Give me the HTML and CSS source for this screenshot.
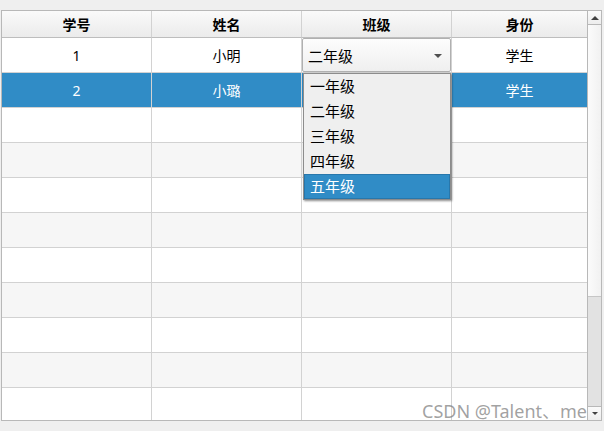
FILE: index.html
```html
<!DOCTYPE html>
<html lang="zh">

<head>
    <meta charset="UTF-8">
    <meta name="viewport" content="width=device-width, initial-scale=1.0">
    <title>学生表</title>
    <link rel="stylesheet" href="styles.css">
</head>

<body>
    <div class="view">
        <div class="table">
            <div class="head">学号</div>
            <div class="head">姓名</div>
            <div class="head">班级</div>
            <div class="head">身份</div>

            <div class="cell">1</div>
            <div class="cell">小明</div>
            <div class="cell editor">
                <div class="combo">
                    <span>二年级</span>
                    <span class="caret"></span>
                </div>
            </div>
            <div class="cell">学生</div>

            <div class="cell selected">2</div>
            <div class="cell selected">小璐</div>
            <div class="cell selected"></div>
            <div class="cell selected">学生</div>

            <div class="cell"></div><div class="cell"></div><div class="cell"></div><div class="cell"></div>
            <div class="cell alt"></div><div class="cell alt"></div><div class="cell alt"></div><div class="cell alt"></div>
            <div class="cell"></div><div class="cell"></div><div class="cell"></div><div class="cell"></div>
            <div class="cell alt"></div><div class="cell alt"></div><div class="cell alt"></div><div class="cell alt"></div>
            <div class="cell"></div><div class="cell"></div><div class="cell"></div><div class="cell"></div>
            <div class="cell alt"></div><div class="cell alt"></div><div class="cell alt"></div><div class="cell alt"></div>
            <div class="cell"></div><div class="cell"></div><div class="cell"></div><div class="cell"></div>
            <div class="cell alt"></div><div class="cell alt"></div><div class="cell alt"></div><div class="cell alt"></div>
            <div class="cell"></div><div class="cell"></div><div class="cell"></div><div class="cell"></div>
        </div>

        <div class="scrollbar">
            <div class="arrow up"><span class="tri-up"></span></div>
            <div class="handle"></div>
            <div class="groove"></div>
            <div class="arrow down"><span class="tri-down"></span></div>
        </div>

        <!-- open combo box popup -->
        <div class="popup">
            <div class="item">一年级</div>
            <div class="item">二年级</div>
            <div class="item">三年级</div>
            <div class="item">四年级</div>
            <div class="item current">五年级</div>
        </div>

        <div class="watermark">CSDN @Talent、me</div>
    </div>
</body>

</html>
```

FILE: styles.css
```css
:root {
    --bg-color: #efefef;
    --frame-color: #b8b8b8;
    --grid-color: #d2d2d2;
    --alt-row: #f6f6f6;
    --highlight: #308cc6;
}

body {
    margin: 0;
    background-color: var(--bg-color);
    font-family: "Noto Sans", "Noto Sans CJK SC", sans-serif;
    color: #000;
}

.view {
    position: relative;
    display: flex;
    width: 599px;
    height: 409px;
    margin: 10px 0 0 1px;
    border: 1px solid var(--frame-color);
    background-color: #fff;
}

.table {
    display: grid;
    grid-template-columns: 150px 150px 150px 135px;
    grid-auto-rows: 35px;
    grid-template-rows: 27px;
    width: 585px;
    overflow: hidden;
}

.head {
    display: flex;
    align-items: center;
    justify-content: center;
    box-sizing: border-box;
    border-right: 1px solid var(--grid-color);
    border-bottom: 1px solid #bdbdbd;
    background: linear-gradient(#fafafa, #ebebeb);
    font-size: 14px;
    font-weight: bold;
}

.cell {
    display: flex;
    align-items: center;
    justify-content: center;
    box-sizing: border-box;
    border-right: 1px solid var(--grid-color);
    border-bottom: 1px solid var(--grid-color);
    font-size: 14px;
}

.head:nth-child(4n),
.cell:nth-child(4n) {
    border-right: none;
}

.alt {
    background-color: var(--alt-row);
}

.selected {
    background-color: var(--highlight);
    color: #fff;
}

.editor {
    padding: 0;
    align-items: stretch;
    justify-content: stretch;
}

.combo {
    flex: 1;
    display: flex;
    align-items: center;
    justify-content: space-between;
    padding: 0 8px 0 5px;
    border: 1px solid #b0b0b0;
    border-radius: 2px;
    background: linear-gradient(#fdfdfd, #efefef);
    font-size: 15px;
}

.caret {
    width: 0;
    height: 0;
    border-left: 4px solid transparent;
    border-right: 4px solid transparent;
    border-top: 4px solid #505050;
    margin-top: 1px;
}

.scrollbar {
    display: flex;
    flex-direction: column;
    width: 13px;
    border-left: 1px solid var(--frame-color);
    background-color: #e2e2e2;
}

.arrow {
    display: flex;
    align-items: center;
    justify-content: center;
    height: 13px;
    background: linear-gradient(#fafafa, #ededed);
}

.arrow.up {
    border-bottom: 1px solid var(--frame-color);
}

.arrow.down {
    border-top: 1px solid var(--frame-color);
}

.tri-up {
    border-left: 4px solid transparent;
    border-right: 4px solid transparent;
    border-bottom: 4px solid #404040;
}

.tri-down {
    border-left: 3px solid transparent;
    border-right: 3px solid transparent;
    border-top: 3px solid #404040;
}

.handle {
    height: 272px;
    box-sizing: border-box;
    border-bottom: 1px solid #c6c6c6;
    background: linear-gradient(90deg, #fbfbfb, #f1f1f1);
}

.groove {
    flex: 1;
    background-color: #e2e2e2;
}

.popup {
    position: absolute;
    left: 301px;
    top: 62px;
    width: 146px;
    border: 1px solid #8c8c8c;
    background-color: #efefef;
    box-shadow: 1px 1px 2px rgba(0, 0, 0, 0.45);
}

.item {
    height: 25px;
    line-height: 25px;
    padding-left: 6px;
    font-size: 15px;
}

.item.current {
    background-color: var(--highlight);
    box-shadow: inset 0 0 0 1px #2877ab;
    color: #fff;
}

.watermark {
    position: absolute;
    left: 420px;
    top: 391px;
    font-size: 18px;
    line-height: 18px;
    color: rgba(120, 120, 120, 0.7);
    white-space: nowrap;
}
```
